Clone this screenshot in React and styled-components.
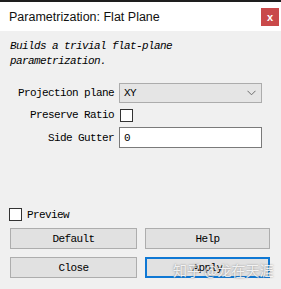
import React from 'react'
import styled, {createGlobalStyle} from 'styled-components'

const GlobalStyle = createGlobalStyle`
  html, body {
    margin: 0;
    padding: 0;
    background: #f0f0f0;
  }
`

const Window = styled.div`
  position: relative;
  width: 281px;
  height: 289px;
  display: flex;
  flex-direction: column;
  background: #f0f0f0;
  border-top: 2px solid #1e1e1e;
  box-sizing: border-box;
  overflow: hidden;
`

const TitleBar = styled.div`
  height: 29px;
  flex-shrink: 0;
  display: flex;
  align-items: center;
  justify-content: space-between;
  padding: 0 2px 0 9px;
  background: #fff;
  font-family: "Liberation Sans", Arial, sans-serif;
  font-size: 12.5px;
  color: #111;
`

const CloseBox = styled.div`
  width: 18px;
  height: 18px;
  display: flex;
  align-items: center;
  justify-content: center;
  background: #c9494a;
  color: #fff;
  font-family: "Liberation Sans", Arial, sans-serif;
  font-size: 11px;
  font-weight: bold;
`

const Body = styled.div`
  flex: 1;
  display: flex;
  flex-direction: column;
  padding: 8px 11px 11px 10px;
  font-family: "Liberation Mono", "DejaVu Sans Mono", monospace;
  font-size: 11px;
  letter-spacing: -0.6px;
  color: #000;
`

const Description = styled.div`
  font-style: italic;
  line-height: 15px;
  white-space: pre;
`

const Form = styled.div`
  display: grid;
  grid-template-columns: 104px 143px;
  grid-template-rows: 20px 22px 21px;
  column-gap: 5px;
  row-gap: 1px;
  margin-top: 14px;
`

const Label = styled.div`
  display: flex;
  align-items: center;
  justify-content: flex-end;
`

const Field = styled.div`
  display: flex;
  align-items: center;
`

const Select = styled.div`
  flex: 1;
  height: 100%;
  box-sizing: border-box;
  display: flex;
  align-items: center;
  justify-content: space-between;
  padding: 0 5px 0 4px;
  background: #e5e5e5;
  border: 1px solid #acacac;
`

const TextBox = styled.div`
  flex: 1;
  height: 100%;
  box-sizing: border-box;
  display: flex;
  align-items: center;
  padding: 0 4px;
  background: #fff;
  border: 1px solid #7a7a7a;
`

const Check = styled.div`
  width: 13px;
  height: 13px;
  box-sizing: border-box;
  background: #fff;
  border: 1px solid #333;
  margin-left: ${(p) => p.offset || 0}px;
`

const Footer = styled.div`
  margin-top: auto;
  display: flex;
  flex-direction: column;
`

const PreviewRow = styled.div`
  display: flex;
  align-items: center;
  gap: 5px;
  height: 13px;
  margin-left: -1px;
`

const ButtonGrid = styled.div`
  display: grid;
  grid-template-columns: 127px 125px;
  grid-auto-rows: 21px;
  column-gap: 8px;
  row-gap: 8px;
  margin-top: 7px;
`

const Button = styled.div`
  box-sizing: border-box;
  display: flex;
  align-items: center;
  justify-content: center;
  background: #e1e1e1;
  border: ${(p) => (p.focused ? '2px solid #0f78d4' : '1px solid #adadad')};
`

const Watermark = styled.div`
  position: absolute;
  left: 173px;
  top: 258px;
  font-family: "Noto Sans CJK SC", sans-serif;
  font-size: 14px;
  letter-spacing: 0;
  color: rgba(255, 255, 255, 0.85);
  text-shadow: 0 0 2px rgba(90, 90, 90, 0.7);
  white-space: nowrap;
  pointer-events: none;
`

const Chevron = () => (
  <svg width="9" height="6" viewBox="0 0 9 6">
    <path d="M0.5 0.8 L4.5 4.8 L8.5 0.8" fill="none" stroke="#6d6d6d" strokeWidth="1" />
  </svg>
)

export default function App() {
  return (
    <Window>
      <GlobalStyle />
      <TitleBar>
        <span>Parametrization: Flat Plane</span>
        <CloseBox>x</CloseBox>
      </TitleBar>
      <Body>
        <Description>{'Builds a trivial flat-plane\nparametrization.'}</Description>
        <Form>
          <Label>Projection plane</Label>
          <Field>
            <Select>
              <span>XY</span>
              <Chevron />
            </Select>
          </Field>
          <Label>Preserve Ratio</Label>
          <Field>
            <Check offset={1} />
          </Field>
          <Label>Side Gutter</Label>
          <Field>
            <TextBox>0</TextBox>
          </Field>
        </Form>
        <Footer>
          <PreviewRow>
            <Check />
            <span>Preview</span>
          </PreviewRow>
          <ButtonGrid>
            <Button>Default</Button>
            <Button>Help</Button>
            <Button>Close</Button>
            <Button focused>Apply</Button>
          </ButtonGrid>
        </Footer>
      </Body>
      <Watermark>知乎 @龙在天涯</Watermark>
    </Window>
  )
}
